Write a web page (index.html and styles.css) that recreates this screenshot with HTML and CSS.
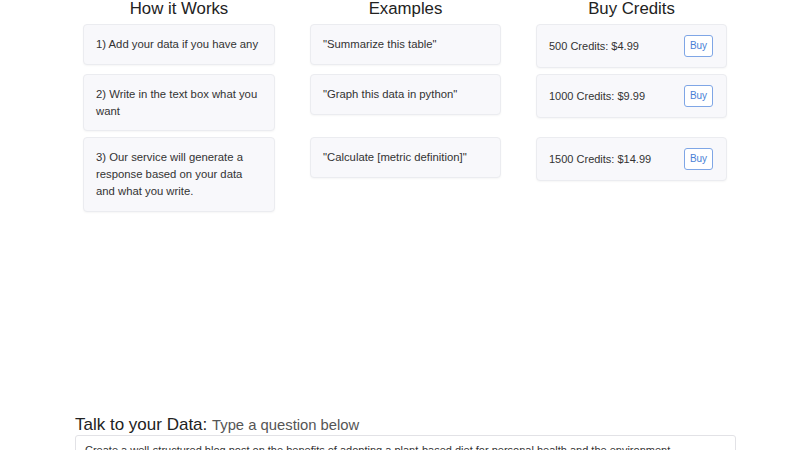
FILE: index.html
```html
<!DOCTYPE html>
<html>
<head>
<meta charset="utf-8">
<link rel="stylesheet" href="styles.css">
</head>
<body>
<div class="page">
  <div class="grid">
    <h2 class="col-title">How it Works</h2>
    <h2 class="col-title">Examples</h2>
    <h2 class="col-title">Buy Credits</h2>

    <div class="card">1) Add your data if you have any</div>
    <div class="card">"Summarize this table"</div>
    <div class="card credit"><span>500 Credits: $4.99</span><button class="buy">Buy</button></div>

    <div class="card">2) Write in the text box what you want</div>
    <div class="card">"Graph this data in python"</div>
    <div class="card credit"><span>1000 Credits: $9.99</span><button class="buy">Buy</button></div>

    <div class="card">3) Our service will generate a response based on your data and what you write.</div>
    <div class="card">"Calculate [metric definition]"</div>
    <div class="card credit"><span>1500 Credits: $14.99</span><button class="buy">Buy</button></div>
  </div>

  <div class="talk">
    <div class="talk-title"><span class="strong">Talk to your Data:</span> <span class="sub">Type a question below</span></div>
    <div class="input">Create a well-structured blog post on the benefits of adopting a plant-based diet for personal health and the environment.</div>
  </div>
</div>
</body>
</html>
```
FILE: styles.css
```css
html, body {
  margin: 0;
  padding: 0;
  background: #ffffff;
  font-family: "Liberation Sans", Arial, sans-serif;
  color: #333333;
  overflow: hidden;
}
.page {
  width: 800px;
  height: 450px;
}
.grid {
  display: grid;
  grid-template-columns: 192px 191px 191px;
  column-gap: 35px;
  row-gap: 6px;
  align-items: start;
  align-content: start;
  margin-left: 83px;
  height: 397px;
}
.col-title {
  margin: 0;
  font-size: 16.8px;
  font-weight: normal;
  line-height: 18px;
  height: 18px;
  text-align: center;
  color: #222222;
}
.card {
  background: #f8f8fb;
  border: 1px solid #ebecf0;
  border-radius: 4px;
  box-shadow: 0 1px 2px rgba(0, 0, 0, 0.04);
  padding: 11px 12px;
  font-size: 11.3px;
  line-height: 16.7px;
  color: #333333;
}
.credit {
  display: flex;
  align-items: center;
  justify-content: space-between;
  padding: 10px 13px 10px 12px;
  font-size: 11px;
}
.buy {
  font-family: "Liberation Sans", Arial, sans-serif;
  font-size: 10px;
  color: #4a7fd6;
  background: #ffffff;
  border: 1px solid #7fa6e6;
  border-radius: 3px;
  width: 29px;
  height: 22px;
  padding: 0;
  line-height: 20px;
}
.talk {
  margin-left: 75px;
  width: 661px;
}
.talk-title {
  font-size: 17px;
  line-height: 20px;
  height: 20px;
  color: #222222;
  padding-top: 18px;
}
.sub {
  font-size: 14.8px;
  color: #555555;
}
.input {
  margin-top: 0;
  border: 1px solid #e2e2e6;
  border-radius: 3px;
  padding: 7px 9px;
  font-size: 11px;
  line-height: 14px;
  color: #333333;
  white-space: nowrap;
  overflow: hidden;
}
```
